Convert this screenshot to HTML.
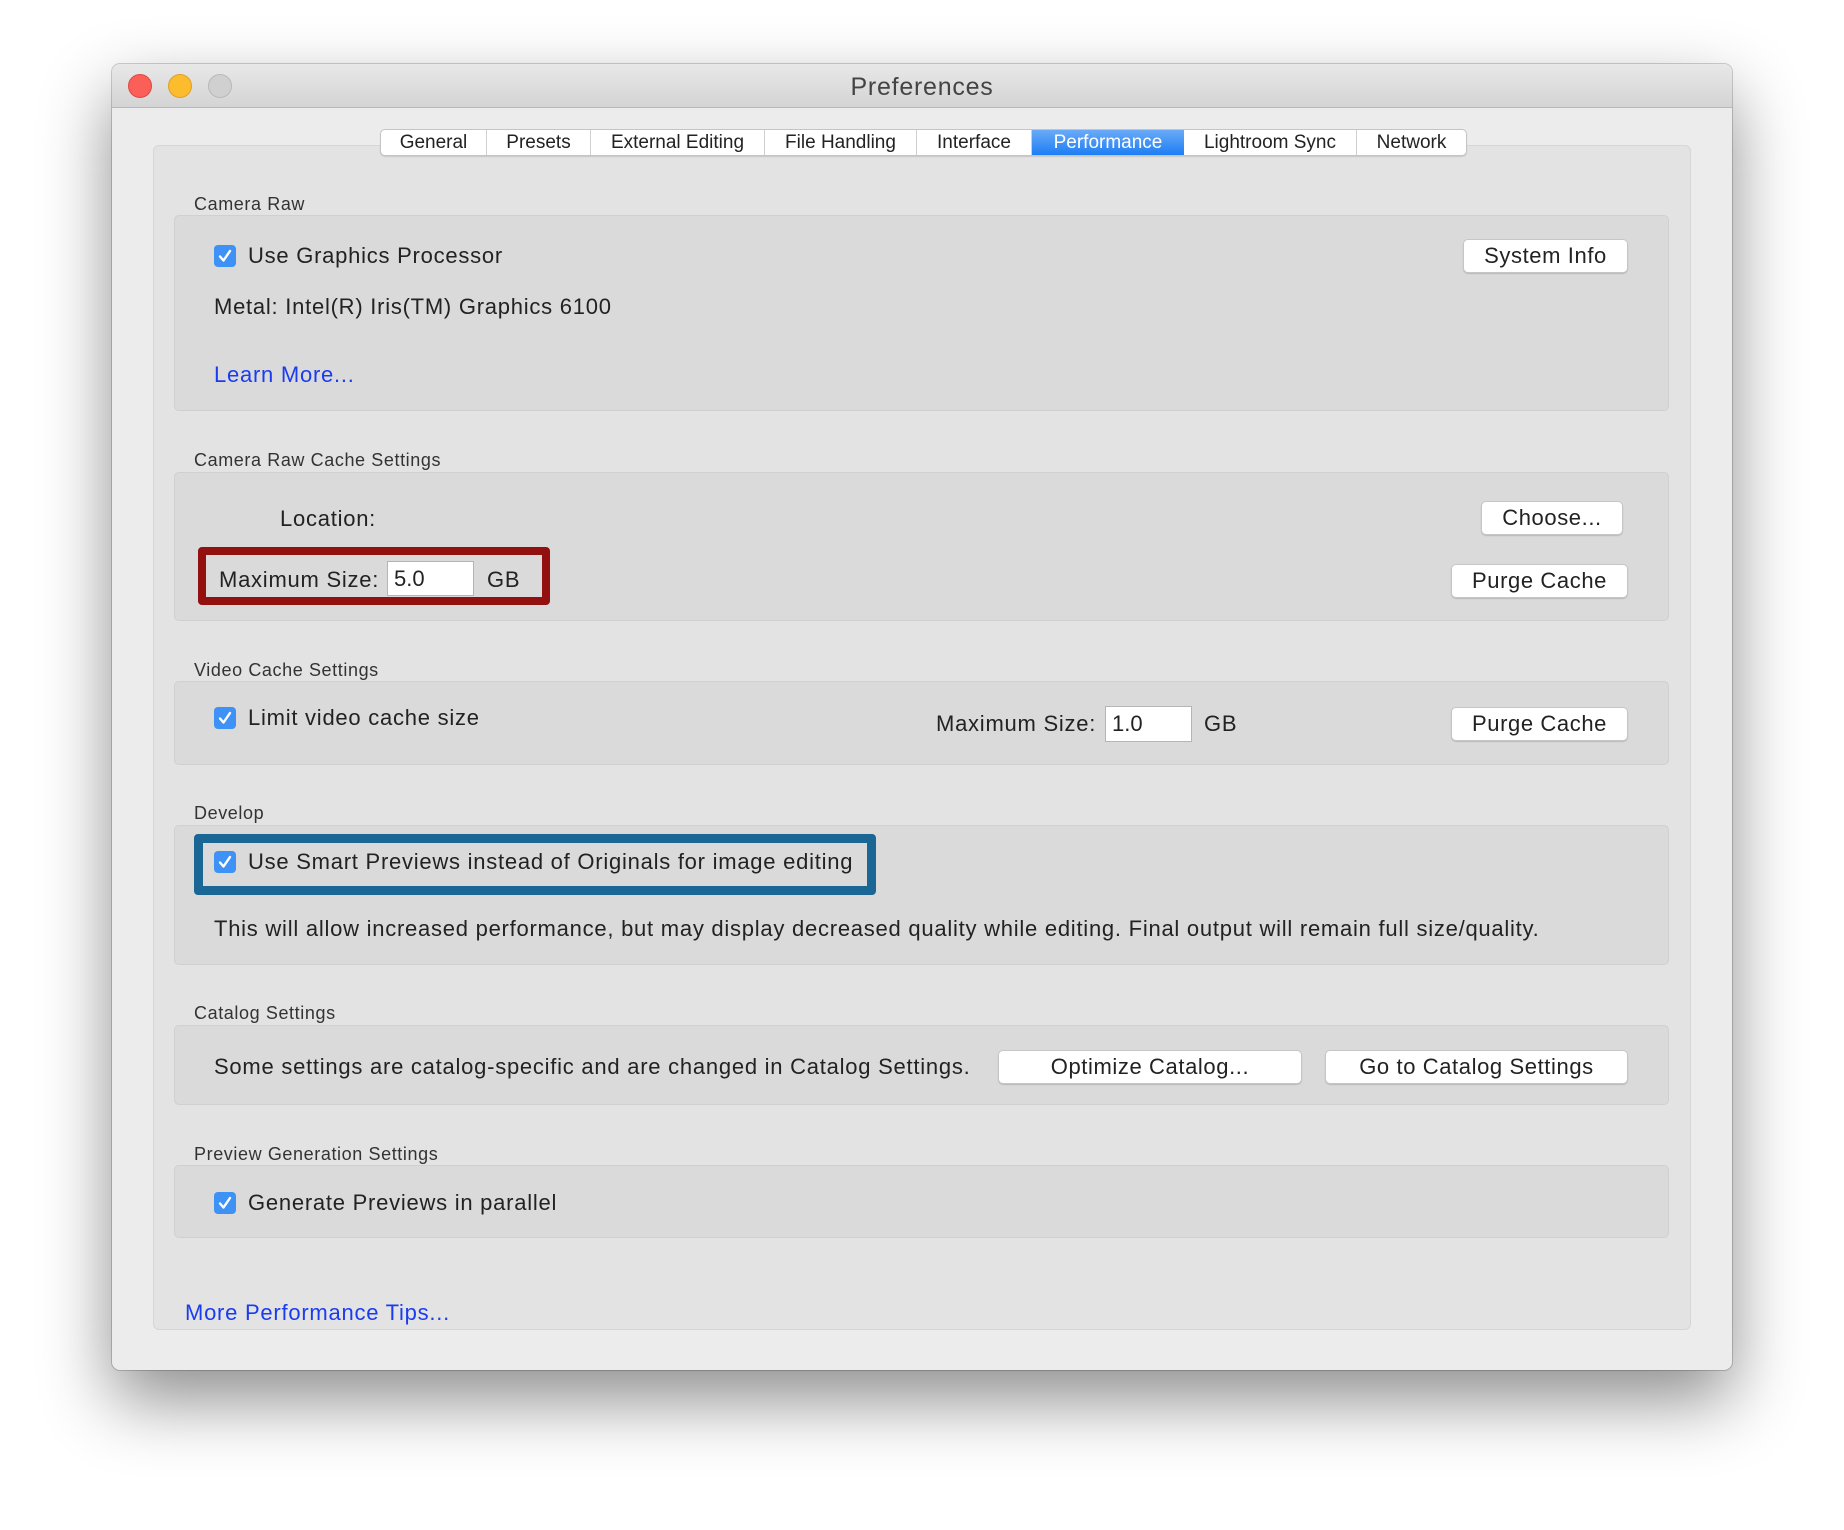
<!DOCTYPE html>
<html><head><meta charset="utf-8"><style>
*{margin:0;padding:0;box-sizing:border-box}
body{width:1844px;height:1530px;background:#fff;font-family:"Liberation Sans",sans-serif;color:#222;position:relative;overflow:hidden}
.a{position:absolute}
.win{left:112px;top:64px;width:1620px;height:1306px;background:#ececec;border-radius:8px;box-shadow:0 30px 70px rgba(0,0,0,.45),0 0 0 1px rgba(0,0,0,.18)}
.tb{left:112px;top:64px;width:1620px;height:44px;background:linear-gradient(#e8e8e8,#d4d4d4);border-radius:8px 8px 0 0;border-bottom:1px solid #b8b8b8}
.dot{width:24px;height:24px;border-radius:50%;top:74px}
.t{line-height:30px;height:30px;white-space:nowrap;font-size:22px;letter-spacing:0.75px}
.lab{font-size:18px;color:#333;letter-spacing:0.6px}
.panel{left:153px;top:145px;width:1538px;height:1185px;background:#e3e3e3;border:1px solid #d6d6d6;border-radius:6px}
.box{left:174px;width:1495px;background:#dadada;border:1px solid #d0d0d0;border-radius:5px}
.btn{background:#fff;border:1px solid #c6c6c6;border-radius:5px;box-shadow:0 1px 1px rgba(0,0,0,.15);font-size:22px;text-align:center;line-height:32px;letter-spacing:0.6px}
.cb{width:22px;height:22px;background:#3f92f5;border-radius:4px}
.cb svg{position:absolute;left:3px;top:3px}
.inp{background:#fff;border:1px solid #b5b5b5;font-size:22px;line-height:33px;padding-left:6px}
.tabs{left:380px;top:129px;height:27px;display:flex;background:#fff;border:1px solid #c4c4c4;border-radius:5px;box-shadow:0 1px 1px rgba(0,0,0,.12);overflow:hidden}
.tabs div{font-size:19px;line-height:26px;text-align:center;border-right:1px solid #d0d0d0}
.link{color:#1a3cf0}
</style></head><body>
<div class="a win"></div>
<div class="a tb"></div>
<div class="a dot" style="left:128px;background:#fc5f57;border:1px solid #de4640"></div>
<div class="a dot" style="left:168px;background:#fdbc2e;border:1px solid #dea022"></div>
<div class="a dot" style="left:208px;background:#d0d0d0;border:1px solid #b8b8b8"></div>
<div class="a t" style="left:0;width:1844px;text-align:center;top:72px;font-size:25px;color:#444">Preferences</div>
<div class="a panel"></div>
<div class="a tabs">
<div style="width:106px">General</div><div style="width:104px">Presets</div><div style="width:174px">External Editing</div><div style="width:152px">File Handling</div><div style="width:115px">Interface</div><div style="width:152px;background:linear-gradient(#6aaaf7,#1d7ef5);color:#fff;border-right:none">Performance</div><div style="width:173px">Lightroom Sync</div><div style="width:109px;border-right:none">Network</div>
</div>

<div class="a t lab" style="left:194px;top:189px">Camera Raw</div>
<div class="a box" style="top:215px;height:196px"></div>
<div class="a cb" style="left:214px;top:245px"><svg width="16" height="16"><path d="M3 8.5l3.5 4L13 3" stroke="#fff" stroke-width="2.4" fill="none" stroke-linecap="round" stroke-linejoin="round"/></svg></div>
<div class="a t" style="left:248px;top:241px">Use Graphics Processor</div>
<div class="a btn" style="left:1463px;top:239px;width:165px;height:34px">System Info</div>
<div class="a t" style="left:214px;top:292px">Metal: Intel(R) Iris(TM) Graphics 6100</div>
<div class="a t link" style="left:214px;top:360px">Learn More...</div>

<div class="a t lab" style="left:194px;top:445px">Camera Raw Cache Settings</div>
<div class="a box" style="top:472px;height:149px"></div>
<div class="a t" style="left:280px;top:504px">Location:</div>
<div class="a btn" style="left:1481px;top:501px;width:142px;height:34px">Choose...</div>
<div class="a" style="left:198px;top:547px;width:352px;height:58px;border:8px solid #921010;border-radius:4px"></div>
<div class="a t" style="left:219px;top:565px">Maximum Size:</div>
<div class="a inp" style="left:387px;top:561px;width:87px;height:35px">5.0</div>
<div class="a t" style="left:487px;top:565px">GB</div>
<div class="a btn" style="left:1451px;top:564px;width:177px;height:34px">Purge Cache</div>

<div class="a t lab" style="left:194px;top:655px">Video Cache Settings</div>
<div class="a box" style="top:681px;height:84px"></div>
<div class="a cb" style="left:214px;top:707px"><svg width="16" height="16"><path d="M3 8.5l3.5 4L13 3" stroke="#fff" stroke-width="2.4" fill="none" stroke-linecap="round" stroke-linejoin="round"/></svg></div>
<div class="a t" style="left:248px;top:703px">Limit video cache size</div>
<div class="a t" style="left:936px;top:709px">Maximum Size:</div>
<div class="a inp" style="left:1105px;top:706px;width:87px;height:36px">1.0</div>
<div class="a t" style="left:1204px;top:709px">GB</div>
<div class="a btn" style="left:1451px;top:707px;width:177px;height:34px">Purge Cache</div>

<div class="a t lab" style="left:194px;top:798px">Develop</div>
<div class="a box" style="top:825px;height:140px"></div>
<div class="a" style="left:194px;top:834px;width:682px;height:61px;border:9px solid #1a6694;border-radius:4px"></div>
<div class="a cb" style="left:214px;top:851px"><svg width="16" height="16"><path d="M3 8.5l3.5 4L13 3" stroke="#fff" stroke-width="2.4" fill="none" stroke-linecap="round" stroke-linejoin="round"/></svg></div>
<div class="a t" style="left:248px;top:847px">Use Smart Previews instead of Originals for image editing</div>
<div class="a t" style="left:214px;top:914px">This will allow increased performance, but may display decreased quality while editing. Final output will remain full size/quality.</div>

<div class="a t lab" style="left:194px;top:998px">Catalog Settings</div>
<div class="a box" style="top:1025px;height:80px"></div>
<div class="a t" style="left:214px;top:1052px">Some settings are catalog-specific and are changed in Catalog Settings.</div>
<div class="a btn" style="left:998px;top:1050px;width:304px;height:34px">Optimize Catalog...</div>
<div class="a btn" style="left:1325px;top:1050px;width:303px;height:34px">Go to Catalog Settings</div>

<div class="a t lab" style="left:194px;top:1139px">Preview Generation Settings</div>
<div class="a box" style="top:1165px;height:73px"></div>
<div class="a cb" style="left:214px;top:1192px"><svg width="16" height="16"><path d="M3 8.5l3.5 4L13 3" stroke="#fff" stroke-width="2.4" fill="none" stroke-linecap="round" stroke-linejoin="round"/></svg></div>
<div class="a t" style="left:248px;top:1188px">Generate Previews in parallel</div>

<div class="a t link" style="left:185px;top:1298px">More Performance Tips...</div>
</body></html>
